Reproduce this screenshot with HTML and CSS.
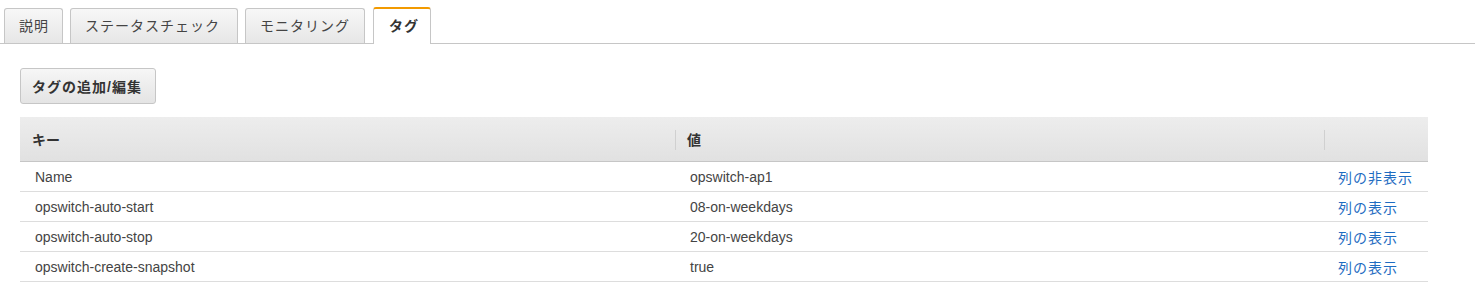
FILE: index.html
```html
<!DOCTYPE html>
<html lang="ja">
<head>
    <meta charset="UTF-8">
    <title>タグ</title>
    <link rel="stylesheet" href="styles.css">
</head>
<body>
    <div class="tabs">
        <div class="tab">説明</div>
        <div class="tab">ステータスチェック</div>
        <div class="tab">モニタリング</div>
        <div class="tab active">タグ</div>
    </div>

    <div class="panel">
        <button class="btn">タグの追加/編集</button>

        <table class="tags">
            <thead>
                <tr>
                    <th class="col-key">キー</th>
                    <th class="col-val"><span class="sep"></span>値</th>
                    <th class="col-act"><span class="sep"></span></th>
                </tr>
            </thead>
            <tbody>
                <tr>
                    <td>Name</td>
                    <td>opswitch-ap1</td>
                    <td><a href="#">列の非表示</a></td>
                </tr>
                <tr>
                    <td>opswitch-auto-start</td>
                    <td>08-on-weekdays</td>
                    <td><a href="#">列の表示</a></td>
                </tr>
                <tr>
                    <td>opswitch-auto-stop</td>
                    <td>20-on-weekdays</td>
                    <td><a href="#">列の表示</a></td>
                </tr>
                <tr>
                    <td>opswitch-create-snapshot</td>
                    <td>true</td>
                    <td><a href="#">列の表示</a></td>
                </tr>
            </tbody>
        </table>
    </div>
</body>
</html>
```

FILE: styles.css
```css
body {
    margin: 0;
    font-family: "Liberation Sans", "Noto Sans CJK JP", sans-serif;
    font-size: 14px;
    color: #444;
    background: #fff;
}
.tabs {
    display: flex;
    align-items: flex-end;
    gap: 7px;
    padding: 7px 0 0 4px;
    border-bottom: 1px solid #c6c6c6;
}
.tab {
    height: 35px;
    box-sizing: border-box;
    padding: 0 13px 0 14px;
    line-height: 35px;
    letter-spacing: 1px;
    border: 1px solid #c6c6c6;
    border-bottom: none;
    border-radius: 3px 3px 0 0;
    background: linear-gradient(#f7f7f7, #e6e6e6);
    color: #444;
}
.tab:nth-child(2) { padding-right: 17px; }
.tab:nth-child(3) { padding-right: 14px; }
.tab.active {
    height: 37px;
    margin-left: 1px;
    margin-bottom: -1px;
    background: #fff;
    border-top: 2px solid #f29a00;
    font-weight: bold;
    color: #333;
    padding: 0 11px 0 15px;
    line-height: 35px;
}
.panel {
    padding: 24px 47px 0 20px;
}
.btn {
    font-family: inherit;
    font-size: 14px;
    font-weight: bold;
    letter-spacing: 1px;
    color: #333;
    height: 36px;
    padding: 0 13px 0 11px;
    border: 1px solid #c6c6c6;
    border-radius: 3px;
    background: linear-gradient(#f6f6f6, #e4e4e4);
}
.tags {
    width: 100%;
    margin-top: 13px;
    border-collapse: collapse;
}
.tags th {
    height: 44px;
    text-align: left;
    font-weight: bold;
    color: #333;
    background: linear-gradient(#ededed, #e1e1e1);
    border-bottom: 1px solid #c6c6c6;
    padding: 0;
    position: relative;
}
.tags .col-key { padding-left: 12px; width: 643px; }
.tags .col-val { padding-left: 12px; width: 637px; }
.sep {
    position: absolute;
    left: 0;
    top: 13px;
    height: 20px;
    border-left: 1px solid #d0d0d0;
}
.tags td {
    height: 29px;
    padding: 0 0 0 15px;
    border-bottom: 1px solid #ddd;
    color: #444;
}
.tags td:nth-child(3) { padding-left: 14px; }
.tags a {
    color: #1e6cc1;
    letter-spacing: 1px;
    text-decoration: none;
}
```
